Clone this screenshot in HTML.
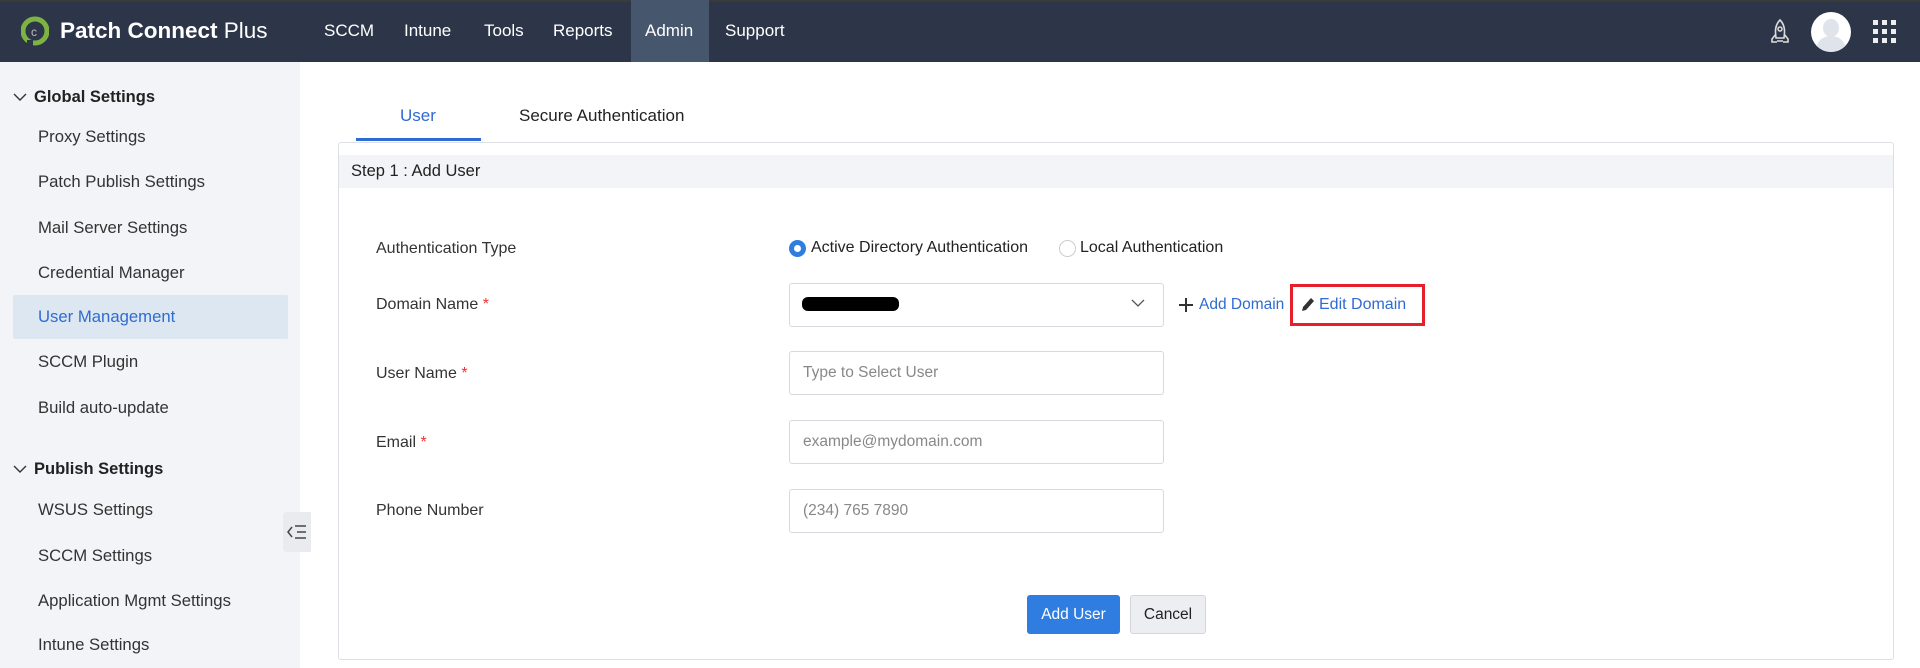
<!DOCTYPE html>
<html><head><meta charset="utf-8"><style>
*{box-sizing:border-box;margin:0;padding:0}
body{width:1920px;height:668px;overflow:hidden;font-family:"Liberation Sans",sans-serif;background:#fff;color:#222;position:relative}
.a{position:absolute;white-space:nowrap}
.hdr{position:absolute;left:0;top:0;width:1920px;height:62px;background:#2d3648;border-top:2px solid #3a3a3a}
.nav{color:#fff;font-size:17px;top:21px}
.side{position:absolute;left:0;top:62px;width:300px;height:606px;background:#f3f4f7}
.si{font-size:16.7px;color:#333;left:38px}
.sh{font-size:16.5px;font-weight:bold;color:#222;left:34px}
.lbl{font-size:16px;color:#333;left:376px}
.inp{position:absolute;left:789px;width:375px;height:44px;border:1px solid #d6d9de;border-radius:3px;font-size:15.5px;color:#888;padding:12px 13px}
.star{color:#e33}
</style></head><body>
<div class="hdr"></div>
<svg class="a" style="left:21px;top:16px" width="28" height="30" viewBox="0 0 28 30"><circle cx="14" cy="15" r="12" fill="none" stroke="#7cb342" stroke-width="5"/><circle cx="14" cy="15" r="7" fill="#2d3648"/><text x="10" y="20" font-size="12" fill="#bbb" font-family="Liberation Sans">c</text><rect x="6" y="24" width="6" height="6" fill="#2d3648"/></svg>
<div class="a" style="left:60px;top:18px;color:#fff;font-size:22.5px"><b>Patch Connect</b> Plus</div>
<div class="a" style="left:631px;top:0;width:78px;height:62px;background:#46566c"></div>
<div class="a nav" style="left:324px">SCCM</div>
<div class="a nav" style="left:404px">Intune</div>
<div class="a nav" style="left:484px">Tools</div>
<div class="a nav" style="left:553px">Reports</div>
<div class="a nav" style="left:645px">Admin</div>
<div class="a nav" style="left:725px">Support</div>
<svg class="a" style="left:1769px;top:18px" width="22" height="28" viewBox="0 0 22 28"><path d="M11 2C6 7 6 13 7 20h8c1-7 1-13-4-18zM7 16l-4 5v3h5M15 16l4 5v3h-5M8 23h6" fill="none" stroke="#ddd" stroke-width="1.6"/><circle cx="11" cy="11" r="2" fill="none" stroke="#ddd" stroke-width="1.5"/></svg>
<div class="a" style="left:1811px;top:12px;width:40px;height:40px;border-radius:50%;background:#fff;overflow:hidden"><div class="a" style="left:12px;top:7px;width:16px;height:18px;border-radius:50%;background:#dfe3ea"></div><div class="a" style="left:6px;top:24px;width:28px;height:22px;border-radius:50%;background:#dfe3ea"></div></div>
<svg class="a" style="left:1873px;top:20px" width="24" height="24"><g fill="#eee"><rect x="0" y="0" width="5" height="5"/><rect x="9" y="0" width="5" height="5"/><rect x="18" y="0" width="5" height="5"/><rect x="0" y="9" width="5" height="5"/><rect x="9" y="9" width="5" height="5"/><rect x="18" y="9" width="5" height="5"/><rect x="0" y="18" width="5" height="5"/><rect x="9" y="18" width="5" height="5"/><rect x="18" y="18" width="5" height="5"/></g></svg>

<div class="side"></div>
<div class="a" style="left:13px;top:295px;width:275px;height:44px;background:#dde7f1;border-radius:2px"></div>
<svg class="a" style="left:13px;top:92px" width="14" height="10"><path d="M1 2l6 6 6-6" fill="none" stroke="#333" stroke-width="1.4"/></svg>
<div class="a sh" style="top:88px">Global Settings</div>
<div class="a si" style="top:127px">Proxy Settings</div>
<div class="a si" style="top:172px">Patch Publish Settings</div>
<div class="a si" style="top:218px">Mail Server Settings</div>
<div class="a si" style="top:263px">Credential Manager</div>
<div class="a si" style="top:307px;color:#2f6bd1">User Management</div>
<div class="a si" style="top:352px">SCCM Plugin</div>
<div class="a si" style="top:398px">Build auto-update</div>
<svg class="a" style="left:13px;top:464px" width="14" height="10"><path d="M1 2l6 6 6-6" fill="none" stroke="#333" stroke-width="1.4"/></svg>
<div class="a sh" style="top:460px">Publish Settings</div>
<div class="a si" style="top:500px">WSUS Settings</div>
<div class="a si" style="top:546px">SCCM Settings</div>
<div class="a si" style="top:591px">Application Mgmt Settings</div>
<div class="a si" style="top:635px">Intune Settings</div>
<div class="a" style="left:283px;top:512px;width:28px;height:40px;background:#e9ebef;border-radius:4px 0 0 4px"></div>
<svg class="a" style="left:286px;top:524px" width="22" height="16"><path d="M6 3L2 8l4 5M9 2h11M11 8h9M9 14h11" fill="none" stroke="#444" stroke-width="1.5"/></svg>

<div class="a" style="left:400px;top:106px;font-size:17px;color:#2f6bd1">User</div>
<div class="a" style="left:519px;top:106px;font-size:17px;color:#222">Secure Authentication</div>
<div class="a" style="left:356px;top:138px;width:125px;height:3px;background:#2f6bd1"></div>
<div class="a" style="left:338px;top:142px;width:1556px;height:518px;border:1px solid #dcdfe4;border-radius:3px"></div>
<div class="a" style="left:339px;top:155px;width:1554px;height:33px;background:#f3f4f7"></div>
<div class="a" style="left:351px;top:162px;font-size:16.5px;color:#222">Step 1 : Add User</div>

<div class="a lbl" style="top:240px">Authentication Type</div>
<div class="a lbl" style="top:296px">Domain Name <span class="star">*</span></div>
<div class="a lbl" style="top:365px">User Name <span class="star">*</span></div>
<div class="a lbl" style="top:434px">Email <span class="star">*</span></div>
<div class="a lbl" style="top:502px">Phone Number</div>

<div class="a" style="left:789px;top:240px;width:17px;height:17px;border-radius:50%;background:#2f7de1"><div class="a" style="left:5px;top:5px;width:7px;height:7px;border-radius:50%;background:#fff"></div></div>
<div class="a" style="left:811px;top:239px;font-size:16px;color:#222">Active Directory Authentication</div>
<div class="a" style="left:1059px;top:240px;width:17px;height:17px;border-radius:50%;border:1px solid #ccc"></div>
<div class="a" style="left:1080px;top:239px;font-size:16px;color:#222">Local Authentication</div>

<div class="inp" style="top:283px"></div>
<div class="a" style="left:802px;top:297px;width:97px;height:14px;border-radius:6px;background:#000"></div>
<svg class="a" style="left:1131px;top:298px" width="14" height="10"><path d="M1 2l6 6 6-6" fill="none" stroke="#555" stroke-width="1.3"/></svg>
<svg class="a" style="left:1178px;top:297px" width="16" height="16"><path d="M8 1v14M1 8h14" stroke="#333" stroke-width="2"/></svg>
<div class="a" style="left:1199px;top:296px;font-size:15.5px;color:#2f6bd1">Add Domain</div>
<div class="a" style="left:1290px;top:284px;width:135px;height:42px;border:3px solid #e5202a"></div>
<svg class="a" style="left:1299px;top:296px" width="16" height="18"><path d="M3 15l1-4 8-9 3 3-8 9z" fill="#333"/></svg>
<div class="a" style="left:1319px;top:296px;font-size:16px;color:#2f6bd1">Edit Domain</div>

<div class="inp" style="top:351px">Type to Select User</div>
<div class="inp" style="top:420px">example@mydomain.com</div>
<div class="inp" style="top:489px">(234) 765 7890</div>

<div class="a" style="left:1027px;top:595px;width:93px;height:39px;background:#2f7de1;border-radius:3px;color:#fff;font-size:15.5px;text-align:center;line-height:39px">Add User</div>
<div class="a" style="left:1130px;top:595px;width:76px;height:39px;background:#eceef1;border:1px solid #d3d6da;border-radius:3px;color:#222;font-size:15.5px;text-align:center;line-height:37px">Cancel</div>
</body></html>
